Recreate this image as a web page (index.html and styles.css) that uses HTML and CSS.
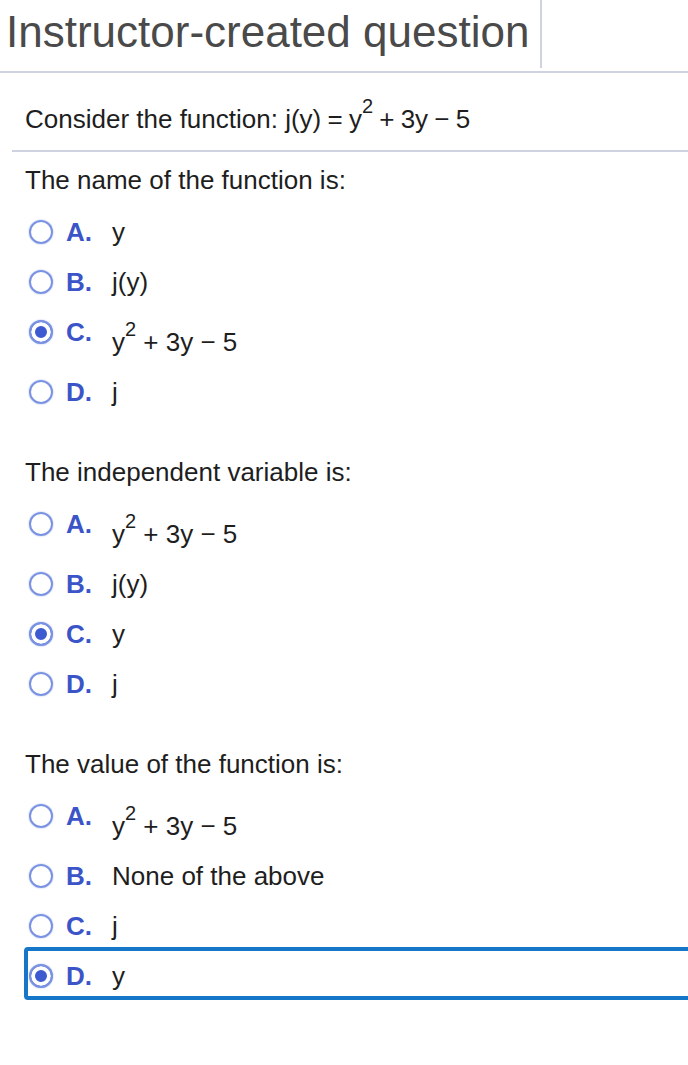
FILE: index.html
```html
<!DOCTYPE html>
<html>
	<head>
		<meta charset="utf-8">
		<link rel="stylesheet" href="styles.css">
		<title>Instructor-created question</title>
	</head>
	<body>
		<div class="header">
			<div class="title">Instructor-created question</div>
		</div>
		<div class="stem">Consider the function: <span class="expr">j(y) = y<sup>2</sup> + 3y &minus; 5</span></div>

		<div class="part">
			<div class="prompt">The name of the function is:</div>
			<div class="opt"><span class="radio"></span><span class="letter">A.</span><span class="val">y</span></div>
			<div class="opt"><span class="radio"></span><span class="letter">B.</span><span class="val">j(y)</span></div>
			<div class="opt"><span class="radio on"></span><span class="letter">C.</span><span class="val math">y<sup>2</sup> + 3y &minus; 5</span></div>
			<div class="opt"><span class="radio"></span><span class="letter">D.</span><span class="val">j</span></div>
		</div>

		<div class="part">
			<div class="prompt">The independent variable is:</div>
			<div class="opt"><span class="radio"></span><span class="letter">A.</span><span class="val math">y<sup>2</sup> + 3y &minus; 5</span></div>
			<div class="opt"><span class="radio"></span><span class="letter">B.</span><span class="val">j(y)</span></div>
			<div class="opt"><span class="radio on"></span><span class="letter">C.</span><span class="val">y</span></div>
			<div class="opt"><span class="radio"></span><span class="letter">D.</span><span class="val">j</span></div>
		</div>

		<div class="part">
			<div class="prompt">The value of the function is:</div>
			<div class="opt"><span class="radio"></span><span class="letter">A.</span><span class="val math">y<sup>2</sup> + 3y &minus; 5</span></div>
			<div class="opt"><span class="radio"></span><span class="letter">B.</span><span class="val">None of the above</span></div>
			<div class="opt"><span class="radio"></span><span class="letter">C.</span><span class="val">j</span></div>
			<div class="opt focus"><span class="radio on"></span><span class="letter">D.</span><span class="val">y</span></div>
		</div>
	</body>
</html>
```

FILE: styles.css
```css
html { overflow-x:hidden; }
body { margin:0; font-family:"Liberation Sans", Arial, sans-serif; font-size:26px; color:#1e1e1e; background:#fff; }

.header { display:flex; padding-bottom:3px; border-bottom:2px solid #cfd3df; }
.title { height:68px; line-height:64px; padding:0 11px 0 6px; font-size:44px; color:#4a4a4a; border-right:2px solid #cfd3df; }

.stem { margin:30px 0 0 12px; padding:0 0 15px 13px; line-height:32px; border-bottom:2px solid #cfd3df; }
.expr { word-spacing:-1px; }

sup { font-size:20px; line-height:0; vertical-align:15px; margin-left:0; }

.part { padding-bottom:27px; }
.prompt { margin:12px 0 11px 25px; line-height:32px; }

.opt { display:flex; align-items:flex-start; margin:0 -10px 0 24px; padding:5px 0; line-height:32px; border:4px solid transparent; border-radius:4px; }
.opt.focus { margin-top:-4px; padding:9px 0 4px; border-color:#1677c9; }

.radio { box-sizing:border-box; width:24px; height:24px; margin:4px 0 0 1px; border:2px solid #7a92e2; border-radius:50%; box-shadow:0 0 1.5px #8ba0e8; }
.radio.on { background:#3d5ad0; box-shadow:inset 0 0 0 4px #fff, 0 0 1.5px #8ba0e8; }
.letter { width:46px; margin-left:13px; font-weight:bold; color:#3b55c8; }
.val { white-space:nowrap; }
.val.math { padding-top:10px; }
```
